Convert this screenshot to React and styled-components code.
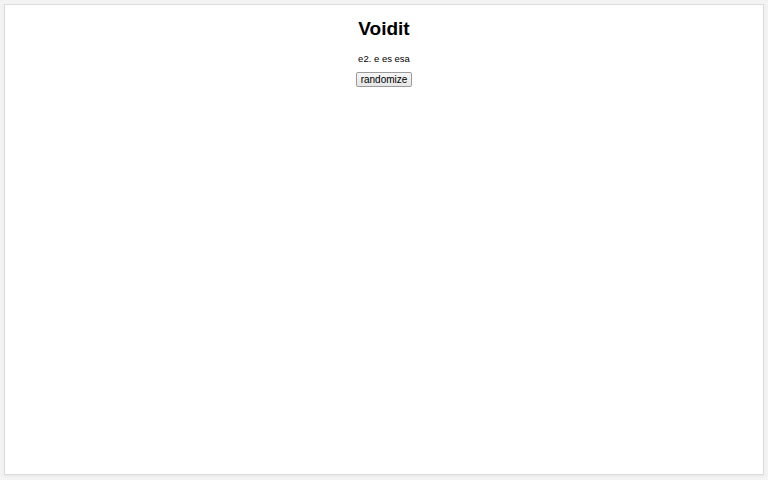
import React from "react";
import styled, { createGlobalStyle } from "styled-components";

const GlobalStyle = createGlobalStyle`
  html, body {
    margin: 0;
    padding: 0;
    background: #f3f3f3;
    font-family: "Liberation Sans", Arial, sans-serif;
  }
`;

const Page = styled.div`
  padding: 4px;
  height: 480px;
  box-sizing: border-box;
`;

const Panel = styled.div`
  background: #fff;
  border: 1px solid #dcdcdc;
  box-shadow: 0 1px 2px rgba(0, 0, 0, 0.06);
  height: 471px;
  box-sizing: border-box;
  display: flex;
  flex-direction: column;
  align-items: center;
  padding-top: 13px;
`;

const Title = styled.h1`
  margin: 0;
  font-size: 19px;
  line-height: 22px;
  font-weight: bold;
  color: #000;
`;

const Subtitle = styled.p`
  margin: 13px 0 0;
  font-size: 9.5px;
  line-height: 12px;
  color: #000;
`;

const Button = styled.button`
  margin-top: 7px;
  font-family: "Liberation Sans", Arial, sans-serif;
  font-size: 10px;
  line-height: 13px;
  padding: 0 4px;
  color: #000;
  background: linear-gradient(#f6f6f6, #e6e6e6);
  border: 1px solid #9a9a9a;
  border-radius: 2px;
`;

export default function App() {
  return (
    <>
      <GlobalStyle />
      <Page>
        <Panel>
          <Title>Voidit</Title>
          <Subtitle>e2. e es esa</Subtitle>
          <Button>randomize</Button>
        </Panel>
      </Page>
    </>
  );
}
